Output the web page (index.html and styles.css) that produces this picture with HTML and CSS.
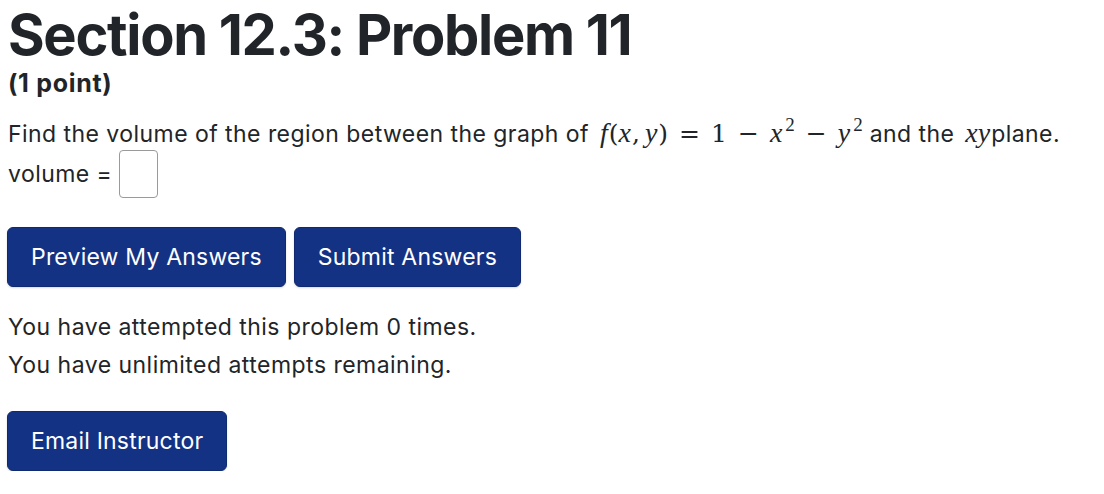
FILE: index.html
```
<!DOCTYPE html>
<html>
<head>
<meta charset="utf-8">
<link rel="stylesheet" href="styles.css">
</head>
<body>
<main class="problem">
  <h1 class="title">Section 12.3: Problem 11</h1>
  <div class="points">(1 point)</div>
  <div class="statement">
    <p class="line">Find the volume of the region between the graph of <span class="math"><i>f</i>(<i>x</i>,&thinsp;<i>y</i>)<span class="op">=</span>1<span class="op">−</span><i>x</i><sup>2</sup><span class="op">−</span><i>y</i><sup>2</sup></span> and the <span class="math"><i>xy</i></span>plane.</p>
    <p class="answer">volume = <span class="input"></span></p>
  </div>
  <div class="actions">
    <button class="btn">Preview My Answers</button>
    <button class="btn">Submit Answers</button>
  </div>
  <div class="attempts">
    <p>You have attempted this problem 0 times.</p>
    <p>You have unlimited attempts remaining.</p>
  </div>
  <div class="actions email">
    <button class="btn">Email Instructor</button>
  </div>
</main>
</body>
</html>
```
FILE: styles.css
```
html, body {
  margin: 0;
  padding: 0;
  background: #ffffff;
}
body {
  font-family: Inter, "Noto Sans", sans-serif;
  color: #212529;
}
.problem {
  padding: 0 8px;
}
.title {
  font-size: 56px;
  font-weight: 700;
  letter-spacing: -1.3px;
  line-height: 70px;
  margin: 0;
}
.points {
  font-size: 25px;
  font-weight: 700;
  letter-spacing: 0.7px;
  line-height: 26px;
}
.statement {
  margin-top: 20px;
  font-size: 23px;
  letter-spacing: 0.45px;
}
.line {
  margin: 0;
  line-height: 34px;
  white-space: nowrap;
}
.math {
  font-family: "DejaVu Serif", "Liberation Serif", serif;
  font-size: 25px;
  letter-spacing: 0;
  margin-left: 4px;
}
.math i {
  font-family: "Liberation Serif", serif;
  font-style: italic;
  font-size: 28px;
  padding-right: 1px;
}
.math .op {
  margin: 0 11px;
  font-weight: 300;
}
.math sup {
  font-family: "Liberation Serif", serif;
  font-size: 19px;
  vertical-align: 11px;
  line-height: 0;
  font-style: normal;
  margin-left: 2px;
}
.answer {
  margin: -1px 0 0;
  display: flex;
  align-items: center;
  gap: 7px;
}
.input {
  display: inline-block;
  width: 37px;
  height: 46px;
  border: 1px solid #9a9a9a;
  border-radius: 4px;
}
.actions {
  display: flex;
  gap: 8px;
  margin-top: 29px;
  margin-left: -1px;
}
.btn {
  font-family: Inter, "Noto Sans", sans-serif;
  font-size: 23px;
  letter-spacing: 0.2px;
  color: #ffffff;
  background: #143284;
  border: 1px solid #0f2a70;
  border-radius: 6px;
  height: 60px;
  padding: 0 23px;
  box-shadow: 0 1px 2px rgba(0,0,0,0.15);
}
.attempts {
  margin-top: 21px;
  font-size: 23px;
  letter-spacing: 0.47px;
}
.attempts p {
  margin: 0;
  line-height: 38px;
}
.email {
  margin-top: 27px;
}
```
